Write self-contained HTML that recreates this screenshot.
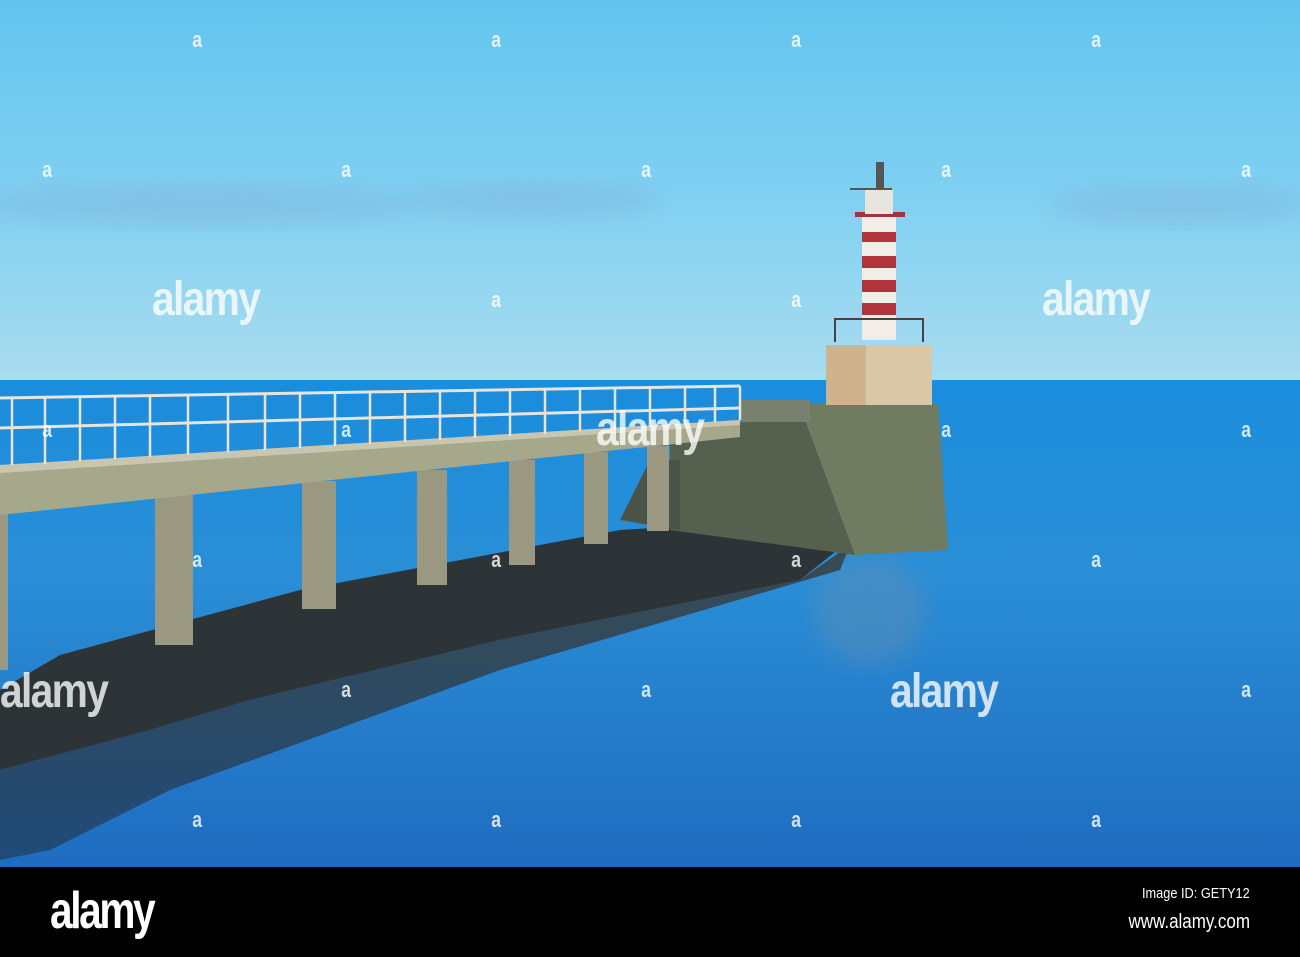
<!DOCTYPE html>
<html><head><meta charset="utf-8"><style>
html,body{margin:0;padding:0;width:1300px;height:957px;overflow:hidden;background:#000}
.bar{position:absolute;left:0;top:867px;width:1300px;height:90px;background:#000;font-family:"Liberation Sans",sans-serif;color:#fff}
.logo{position:absolute;left:50px;top:14px;font-size:52px;font-weight:bold;letter-spacing:-3px;transform:scaleX(0.78);transform-origin:left;}
.id{position:absolute;right:50px;top:18px;font-size:15px;transform:scaleX(0.85);transform-origin:right}
.url{position:absolute;right:50px;top:44px;font-size:20px;transform:scaleX(0.85);transform-origin:right}
.wm{position:absolute;font-family:"Liberation Sans",sans-serif;font-weight:bold;color:rgba(255,255,255,.78);font-size:48px;letter-spacing:-2px;transform:scaleX(0.85);transform-origin:left}
.sa{position:absolute;font-family:"Liberation Sans",sans-serif;font-weight:bold;color:rgba(255,255,255,.8);font-size:22px;transform:scaleX(0.8)}
</style></head><body>
<svg width="1300" height="867" style="position:absolute;left:0;top:0">
<defs>
<linearGradient id="sky" x1="0" y1="0" x2="0" y2="1"><stop offset="0" stop-color="#62c4ee"/><stop offset="0.5" stop-color="#7fd0f2"/><stop offset="1" stop-color="#a9dcef"/></linearGradient>
<linearGradient id="sea" x1="0" y1="0" x2="0" y2="1"><stop offset="0" stop-color="#1a8ddc"/><stop offset="0.4" stop-color="#2a8ed6"/><stop offset="1" stop-color="#1f6cc0"/></linearGradient>
<linearGradient id="stone" x1="0" y1="0" x2="0" y2="1"><stop offset="0" stop-color="#3a4a50"/><stop offset="1" stop-color="#1f4a78"/></linearGradient>
<filter id="b"><feGaussianBlur stdDeviation="12"/></filter>
</defs>
<rect width="1300" height="381" fill="url(#sky)"/>
<g filter="url(#b)" opacity=".35" fill="#7fa8d0">
<ellipse cx="200" cy="205" rx="220" ry="22"/>
<ellipse cx="530" cy="200" rx="130" ry="18"/>
<ellipse cx="1180" cy="205" rx="130" ry="20"/>
</g>
<rect y="380" width="1300" height="487" fill="url(#sea)"/>
<ellipse cx="870" cy="610" rx="55" ry="55" fill="#6a8fb0" opacity=".4" filter="url(#b)"/>
<!-- breakwater -->
<polygon points="0,690 60,655 300,590 620,530 790,520 850,540 800,580 500,640 250,700 150,730 0,770" fill="#2c3438"/>
<polygon points="0,770 150,730 250,700 500,640 800,580 850,545 840,570 500,670 170,790 50,850 0,860" fill="url(#stone)"/>
<!-- pier head -->
<polygon points="805,403 938,403 948,550 855,555 800,420" fill="#6f7c62"/>
<polygon points="670,425 805,420 855,555 670,530" fill="#55604f"/>
<polygon points="620,520 650,460 680,460 680,530" fill="#4a5448"/>
<rect x="740" y="400" width="70" height="22" fill="#7a8070"/>
<!-- lighthouse -->
<polygon points="826,405 932,405 932,345 826,345" fill="#d8c8a8"/>
<rect x="826" y="345" width="40" height="60" fill="#c9a57a" opacity=".6"/>
<rect x="862" y="215" width="34" height="125" fill="#f2ede6"/>
<rect x="862" y="232" width="34" height="10" fill="#b0343a"/>
<rect x="862" y="256" width="34" height="12" fill="#b0343a"/>
<rect x="862" y="280" width="34" height="12" fill="#b0343a"/>
<rect x="862" y="303" width="34" height="12" fill="#b0343a"/>
<rect x="855" y="212" width="50" height="5" fill="#a0343a"/>
<rect x="865" y="190" width="28" height="24" fill="#e8e4de"/>
<rect x="850" y="188" width="42" height="2" fill="#555"/>
<rect x="876" y="162" width="8" height="28" fill="#555"/>
<rect x="834" y="318" width="90" height="2" fill="#444"/>
<g stroke="#444" stroke-width="2"><line x1="835" y1="318" x2="835" y2="342"/><line x1="923" y1="318" x2="923" y2="342"/></g>
<!-- pier pillars -->
<g fill="#9a9880">
<rect x="0" y="510" width="8" height="160"/>
<rect x="155" y="495" width="38" height="150"/>
<rect x="302" y="481" width="34" height="128"/>
<rect x="417" y="470" width="30" height="115"/>
<rect x="509" y="460" width="26" height="105"/>
<rect x="584" y="452" width="24" height="92"/>
<rect x="647" y="446" width="22" height="85"/>
</g>
<!-- deck -->
<polygon points="0,465 740,420 740,437 0,515" fill="#a6a88c"/>
<polygon points="0,465 740,420 740,425 0,473" fill="#c8c6b0"/>
<!-- railing -->
<g stroke="#e6e4dc" stroke-width="3" fill="none">
<polyline points="0,398 740,386"/><polyline points="0,428 740,408"/>
</g>
<g stroke="#e6e4dc" stroke-width="2.5">
<line x1="12" y1="398" x2="12" y2="465"/><line x1="45" y1="397" x2="45" y2="464"/><line x1="80" y1="397" x2="80" y2="461"/><line x1="115" y1="396" x2="115" y2="459"/><line x1="150" y1="396" x2="150" y2="457"/><line x1="188" y1="395" x2="188" y2="455"/><line x1="228" y1="394" x2="228" y2="452"/><line x1="265" y1="393" x2="265" y2="450"/><line x1="300" y1="393" x2="300" y2="448"/><line x1="335" y1="392" x2="335" y2="446"/><line x1="370" y1="392" x2="370" y2="444"/><line x1="405" y1="391" x2="405" y2="442"/><line x1="440" y1="391" x2="440" y2="440"/><line x1="475" y1="390" x2="475" y2="438"/><line x1="510" y1="389" x2="510" y2="436"/><line x1="545" y1="389" x2="545" y2="434"/><line x1="580" y1="388" x2="580" y2="431"/><line x1="615" y1="388" x2="615" y2="429"/><line x1="650" y1="387" x2="650" y2="427"/><line x1="685" y1="387" x2="685" y2="424"/><line x1="715" y1="386" x2="715" y2="422"/><line x1="740" y1="386" x2="740" y2="420"/>
</g>
</svg>
<div class="sa" style="left:191px;top:27px">a</div><div class="sa" style="left:490px;top:27px">a</div><div class="sa" style="left:790px;top:27px">a</div><div class="sa" style="left:1090px;top:27px">a</div>
<div class="sa" style="left:41px;top:157px">a</div><div class="sa" style="left:340px;top:157px">a</div><div class="sa" style="left:640px;top:157px">a</div><div class="sa" style="left:940px;top:157px">a</div><div class="sa" style="left:1240px;top:157px">a</div>
<div class="sa" style="left:490px;top:287px">a</div><div class="sa" style="left:790px;top:287px">a</div>
<div class="sa" style="left:41px;top:417px">a</div><div class="sa" style="left:340px;top:417px">a</div><div class="sa" style="left:940px;top:417px">a</div><div class="sa" style="left:1240px;top:417px">a</div>
<div class="sa" style="left:191px;top:547px">a</div><div class="sa" style="left:490px;top:547px">a</div><div class="sa" style="left:790px;top:547px">a</div><div class="sa" style="left:1090px;top:547px">a</div>
<div class="sa" style="left:340px;top:677px">a</div><div class="sa" style="left:640px;top:677px">a</div><div class="sa" style="left:1240px;top:677px">a</div>
<div class="sa" style="left:191px;top:807px">a</div><div class="sa" style="left:490px;top:807px">a</div><div class="sa" style="left:790px;top:807px">a</div><div class="sa" style="left:1090px;top:807px">a</div>
<div class="wm" style="left:152px;top:272px">alamy</div>
<div class="wm" style="left:1042px;top:272px">alamy</div>
<div class="wm" style="left:596px;top:402px">alamy</div>
<div class="wm" style="left:0px;top:664px">alamy</div>
<div class="wm" style="left:890px;top:664px">alamy</div>
<div class="bar"><div class="logo">alamy</div><div class="id">Image ID: GETY12</div><div class="url">www.alamy.com</div></div>
</body></html>
